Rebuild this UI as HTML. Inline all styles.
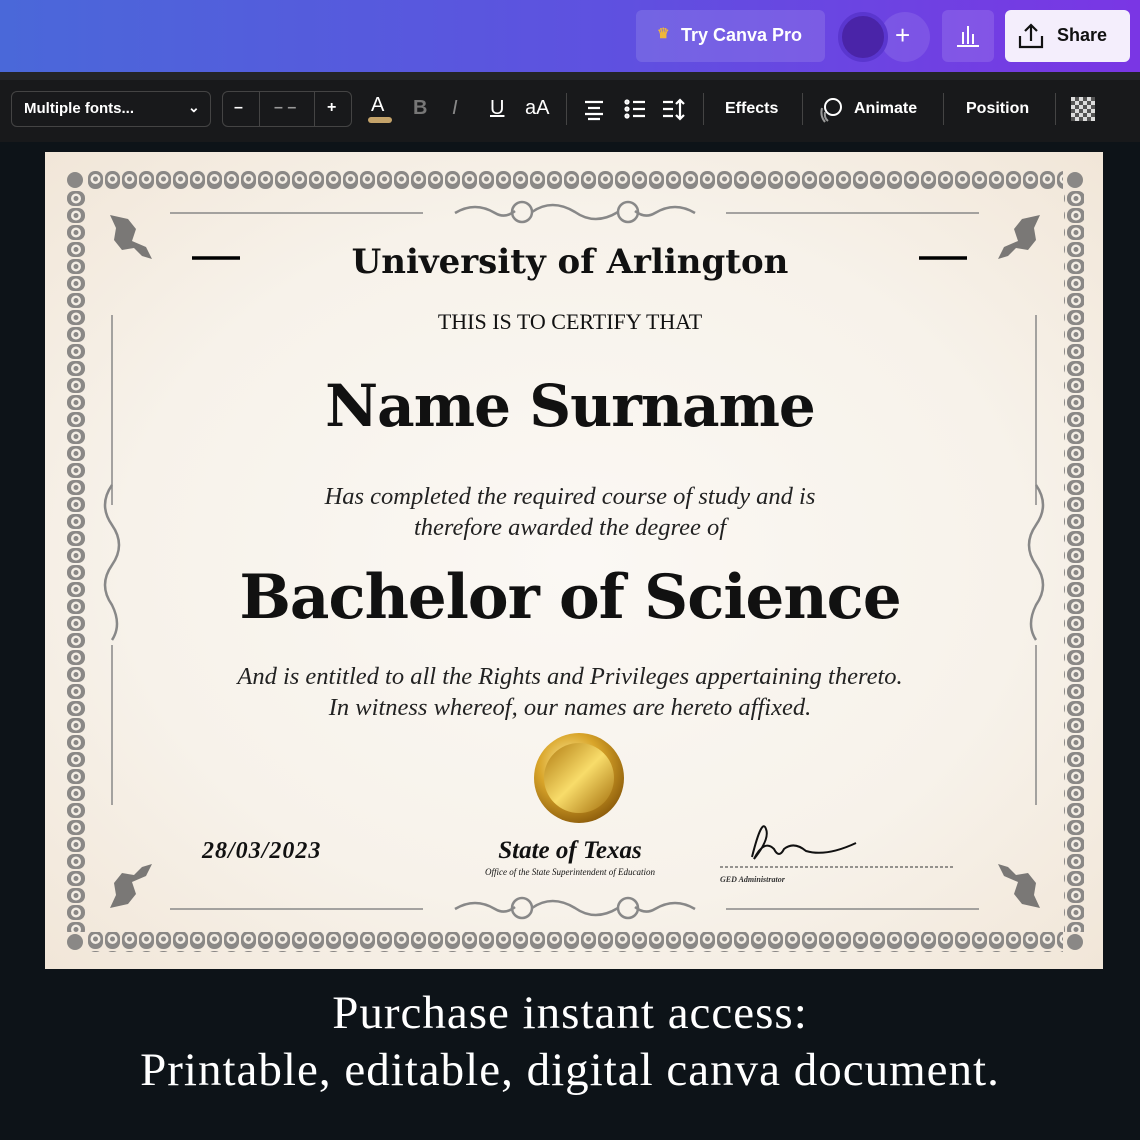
<!DOCTYPE html>
<html><head><meta charset="utf-8"><style>
*{margin:0;padding:0;box-sizing:border-box}
body{width:1140px;height:1140px;background:#0d1318;position:relative;overflow:hidden;font-family:"Liberation Sans",sans-serif}
.top{position:absolute;left:0;top:0;width:1140px;height:72px;background:linear-gradient(90deg,#4a68d9,#5f50e0 55%,#7a36e4)}
.tb{position:absolute;left:0;top:72px;width:1140px;height:70px;background:#18191b;border-top:8px solid #232427}
.abs{position:absolute}
.w{color:#fff;font-weight:bold;font-size:16px}
.cert{position:absolute;left:45px;top:152px;width:1058px;height:817px;background:radial-gradient(ellipse at 50% 50%,#fbf8f4 0%,#f7f2ea 60%,#f1e6d8 100%)}
.c{position:absolute;left:0;width:1140px;text-align:center;color:#111}
.bl{font-family:"DejaVu Serif","Liberation Serif",serif;font-weight:bold}
.it{font-family:"Liberation Serif",serif;font-style:italic}
</style></head><body>
<div class="top"></div>
<div class="abs" style="left:636px;top:10px;width:189px;height:52px;background:rgba(255,255,255,.12);border-radius:6px"></div>
<div class="abs w" style="left:657px;top:25px;color:#f0b73a;font-size:14px">♛</div>
<div class="abs w" style="left:681px;top:25px;font-size:18px">Try Canva Pro</div>
<div class="abs" style="left:880px;top:12px;width:50px;height:50px;border-radius:50%;background:rgba(255,255,255,.1)"></div>
<div class="abs" style="left:838px;top:12px;width:50px;height:50px;border-radius:50%;background:#4a24a8;border:4px solid #5a36cf"></div>
<div class="abs w" style="left:895px;top:20px;font-size:26px;font-weight:normal">+</div>
<div class="abs" style="left:942px;top:10px;width:52px;height:52px;background:rgba(255,255,255,.12);border-radius:6px"></div>
<svg class="abs" style="left:955px;top:24px" width="26" height="24" fill="none" stroke="#fff" stroke-width="2"><path d="M2 22H24M8 20V8M13 20V2M18 20V10"/></svg>
<div class="abs" style="left:1005px;top:10px;width:125px;height:52px;background:#f4eefc;border-radius:6px"></div>
<svg class="abs" style="left:1017px;top:22px" width="28" height="28" fill="none" stroke="#111" stroke-width="2.2"><path d="M3 14V25H25V14M14 19V3M8 9L14 3L20 9"/></svg>
<div class="abs w" style="left:1057px;top:25px;color:#111;font-size:18px">Share</div>
<div class="tb"></div>
<div class="abs" style="left:11px;top:91px;width:200px;height:36px;border:1px solid #444;border-radius:6px"></div>
<div class="abs w" style="left:24px;top:100px;font-size:15px">Multiple fonts...</div>
<div class="abs w" style="left:188px;top:99px;font-size:14px">⌄</div>
<div class="abs" style="left:222px;top:91px;width:130px;height:36px;border:1px solid #444;border-radius:6px"></div>
<div class="abs" style="left:259px;top:92px;width:56px;height:34px;border-left:1px solid #444;border-right:1px solid #444"></div>
<div class="abs w" style="left:234px;top:99px">–</div><div class="abs w" style="left:274px;top:99px;color:#999">– –</div><div class="abs w" style="left:327px;top:99px">+</div>
<div class="abs w" style="left:371px;top:94px;font-size:20px;font-weight:normal">A</div>
<div class="abs" style="left:368px;top:117px;width:24px;height:6px;background:#c4a36a;border-radius:3px"></div>
<div class="abs w" style="left:413px;top:97px;font-size:20px;color:#777">B</div>
<div class="abs" style="left:452px;top:97px;font-size:20px;color:#888;font-style:italic">I</div>
<div class="abs w" style="left:490px;top:97px;font-size:20px;font-weight:normal;text-decoration:underline">U</div>
<div class="abs w" style="left:525px;top:97px;font-size:20px;font-weight:normal">aA</div>
<div class="abs" style="left:566px;top:93px;width:1px;height:32px;background:#444"></div>
<svg class="abs" style="left:583px;top:98px" width="110" height="24" fill="none" stroke="#fff" stroke-width="2.2"><path d="M2 4H20M5 10H17M2 16H20M5 21H17"/><path d="M50 4H62M50 11H62M50 18H62"/><circle cx="44" cy="4" r="1.5"/><circle cx="44" cy="11" r="1.5"/><circle cx="44" cy="18" r="1.5"/><path d="M80 4H90M80 11H90M80 18H90M97 3V20M93 6L97 2L101 6M93 17L97 21L101 17"/></svg>
<div class="abs" style="left:703px;top:93px;width:1px;height:32px;background:#444"></div>
<div class="abs w" style="left:725px;top:100px">Effects</div>
<div class="abs" style="left:802px;top:93px;width:1px;height:32px;background:#444"></div>
<svg class="abs" style="left:818px;top:96px" width="26" height="28" fill="none" stroke="#fff" stroke-width="2"><circle cx="15" cy="11" r="8"/><path d="M7 16Q6 22 10 25M4 12Q2 20 7 26" stroke="#999"/></svg>
<div class="abs w" style="left:854px;top:100px">Animate</div>
<div class="abs" style="left:943px;top:93px;width:1px;height:32px;background:#444"></div>
<div class="abs w" style="left:966px;top:100px">Position</div>
<div class="abs" style="left:1055px;top:93px;width:1px;height:32px;background:#444"></div>
<svg class="abs" style="left:1071px;top:97px" width="24" height="24"><pattern id="ck" width="8" height="8" patternUnits="userSpaceOnUse"><rect width="4" height="4" fill="#ddd"/><rect x="4" y="4" width="4" height="4" fill="#ddd"/><rect x="4" width="4" height="4" fill="#555"/><rect y="4" width="4" height="4" fill="#555"/></pattern><rect width="24" height="24" fill="url(#ck)"/></svg>

<div class="cert"></div>
<svg class="abs" style="left:0;top:0" width="1140" height="1140" fill="none">
<defs>
<pattern id="bh" width="17" height="20" patternUnits="userSpaceOnUse" x="87" y="170"><rect x="1" y="1" width="15" height="18" rx="7" fill="#8a8886"/><circle cx="8.5" cy="9" r="5" fill="#f3ede4"/><circle cx="8.5" cy="9" r="2.5" fill="#8a8886"/></pattern>
<pattern id="bv" width="20" height="17" patternUnits="userSpaceOnUse" x="66" y="190"><rect x="1" y="1" width="18" height="15" rx="7" fill="#8a8886"/><circle cx="10" cy="8.5" r="5" fill="#f3ede4"/><circle cx="10" cy="8.5" r="2.5" fill="#8a8886"/></pattern>
<radialGradient id="gold" cx="40%" cy="35%" r="70%"><stop offset="0" stop-color="#fff0a0"/><stop offset=".5" stop-color="#d9a52a"/><stop offset="1" stop-color="#8a5a0a"/></radialGradient>
<linearGradient id="g2" x1="0" y1="0" x2="1" y2="1"><stop offset="0" stop-color="#b07a10"/><stop offset=".5" stop-color="#f8dc6a"/><stop offset="1" stop-color="#a06a08"/></linearGradient>
</defs>
<rect x="87" y="170" width="976" height="20" fill="url(#bh)"/>
<rect x="87" y="932" width="976" height="20" fill="url(#bh)"/>
<rect x="66" y="190" width="20" height="742" fill="url(#bv)"/>
<rect x="1064" y="190" width="20" height="742" fill="url(#bv)"/>
<g fill="#8a8886"><circle cx="75" cy="180" r="8"/><circle cx="1075" cy="180" r="8"/><circle cx="75" cy="942" r="8"/><circle cx="1075" cy="942" r="8"/></g>
<g stroke="#888" stroke-width="1.5"><path d="M170 213H423M726 213H979M170 909H423M726 909H979M112 315V505M112 645V805M1036 315V505M1036 645V805"/></g>
<g stroke="#000" stroke-width="3.5"><path d="M192 258H240M919 258H967"/></g>
<g stroke="#888" stroke-width="2.5" fill="none">
<path d="M455 213q20 -12 40 0q10 6 20 -2M695 213q-20 -12 -40 0q-10 6 -20 -2"/><circle cx="522" cy="212" r="10"/><circle cx="628" cy="212" r="10"/><path d="M532 212q20 -14 43 0q20 14 43 0"/>
<path d="M455 909q20 -12 40 0q10 6 20 -2M695 909q-20 -12 -40 0q-10 6 -20 -2"/><circle cx="522" cy="908" r="10"/><circle cx="628" cy="908" r="10"/><path d="M532 908q20 -14 43 0q20 14 43 0"/>
<path d="M112 485q-14 20 0 40q14 20 0 40q-14 20 0 40q10 20 0 35M1036 485q14 20 0 40q-14 20 0 40q14 20 0 40q-10 20 0 35"/>
</g>
<g fill="#7a7876">
<path d="M110 215l18 4l8 10l-4 12l14 6l6 12l-10 -3l-8 -8l-12 2l-8 -10l2 -12z"/><path d="M1040 215l-18 4l-8 10l4 12l-14 6l-6 12l10 -3l8 -8l12 2l8 -10l-2 -12z"/>
<path d="M110 908l18 -4l8 -10l-4 -12l14 -6l6 -12l-10 3l-8 8l-12 -2l-8 10l2 12z"/><path d="M1040 908l-18 -4l-8 -10l4 -12l-14 -6l-6 -12l10 3l8 8l12 -2l8 10l-2 12z"/>
</g>
<circle cx="579" cy="778" r="45" fill="url(#gold)"/><circle cx="579" cy="778" r="35" fill="url(#g2)"/>
<path d="M752 857q10 -40 14 -28q4 10 -12 30q10 -20 20 -10q5 10 10 0q10 -8 22 2q20 6 50 -8" stroke="#111" stroke-width="2" fill="none"/>
<path d="M720 867H953" stroke="#333" stroke-width="1" stroke-dasharray="3 2"/>
</svg>
<div class="c bl" style="top:242px;font-size:34px">University of Arlington</div>
<div class="c" style="top:309px;font-family:'Liberation Serif',serif;font-size:22px">THIS IS TO CERTIFY THAT</div>
<div class="c bl" style="top:372px;font-size:58px;letter-spacing:-1px">Name Surname</div>
<div class="c it" style="top:481px;font-size:24.5px;line-height:31px;color:#222">Has completed the required course of study and is<br>therefore awarded the degree of</div>
<div class="c bl" style="top:562px;font-size:61px;letter-spacing:-1px">Bachelor of Science</div>
<div class="c it" style="top:661px;font-size:24.5px;line-height:31px;color:#222">And is entitled to all the Rights and Privileges appertaining thereto.<br>In witness whereof, our names are hereto affixed.</div>
<div class="abs it" style="left:202px;top:838px;font-size:24px;font-weight:bold;color:#111;letter-spacing:1px">28/03/2023</div>
<div class="c it" style="top:837px;font-size:25px;font-weight:bold;left:0">State of Texas</div>
<div class="c it" style="top:867px;font-size:9px">Office of the State Superintendent of Education</div>
<div class="abs it" style="left:720px;top:875px;font-size:8px;font-weight:bold;color:#333">GED Administrator</div>
<div class="c" style="top:985px;color:#fff;font-family:'Liberation Serif',serif;font-size:47px;line-height:57px;letter-spacing:1px">Purchase instant access:<br>Printable, editable, digital canva document.</div>
</body></html>
